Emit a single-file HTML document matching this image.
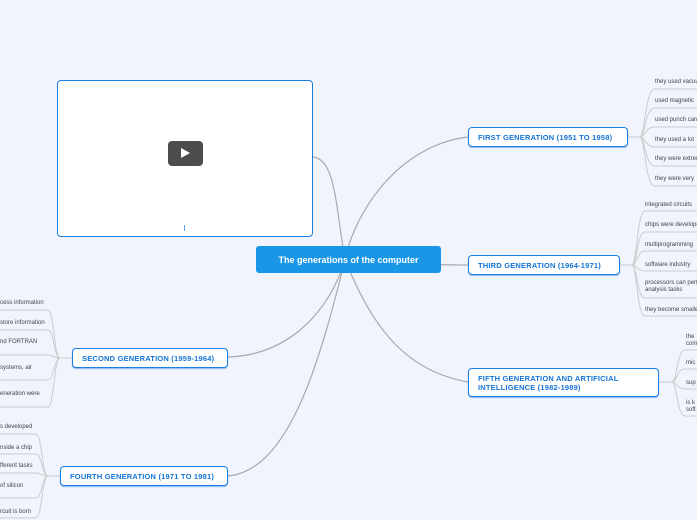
<!DOCTYPE html>
<html><head><meta charset="utf-8"><style>
body{margin:0;width:697px;height:520px;background:#f1f4fd;position:relative;overflow:hidden;font-family:"Liberation Sans",sans-serif}
.b{position:absolute;background:#fff;border:1px solid #1a7fe0;border-radius:4px;color:#1473d6;font-weight:bold;font-size:7.5px;box-sizing:border-box;display:flex;align-items:center;padding-left:9px;box-shadow:0 1px 1px #8ab8ee;letter-spacing:.2px}
.t{position:absolute;font-size:6px;color:#444;white-space:nowrap}
svg{position:absolute;left:0;top:0}
</style></head><body>
<svg width="697" height="520" fill="none" stroke="#aaa" stroke-width="1.2">
<path d="M345 260 C355 210 400 145 468 137"/>
<path d="M345 260 C380 262 420 265 468 265"/>
<path d="M345 260 C370 320 400 370 468 382"/>
<path d="M345 260 C330 310 290 355 228 357"/>
<path d="M345 260 C320 360 290 470 228 476"/>
<path d="M345 260 C335 200 335 160 313 157"/>
<g stroke="#ccc" stroke-width="1">
<path d="M628 137 H640 M640 137 C645 137 645 89 655 89 H697 M640 137 C645 137 645 108 655 108 H697 M640 137 C645 137 645 127 655 127 H697 M640 137 C645 137 645 147 655 147 H697 M640 137 C645 137 645 166 655 166 H697 M640 137 C645 137 645 186 655 186 H697"/>
<path d="M620 265 H632 M632 265 C637 265 637 211 645 211 H697 M632 265 C637 265 637 232 645 232 H697 M632 265 C637 265 637 251 645 251 H697 M632 265 C637 265 637 271 645 271 H697 M632 265 C637 265 637 298 645 298 H697 M632 265 C637 265 637 316 645 316 H697"/>
<path d="M659 382 H672 M672 382 C677 382 677 350 685 350 H697 M672 382 C677 382 677 369 685 369 H697 M672 382 C677 382 677 389 685 389 H697 M672 382 C677 382 677 416 685 416 H697"/>
<path d="M72 358 H60 M60 358 C54 358 54 310 48 310 H0 M60 358 C54 358 54 330 48 330 H0 M60 358 C54 358 54 355 48 355 H0 M60 358 C54 358 54 380 48 380 H0 M60 358 C54 358 54 407 48 407 H0"/>
<path d="M60 476 H48 M48 476 C42 476 42 434 36 434 H0 M48 476 C42 476 42 454 36 454 H0 M48 476 C42 476 42 473 36 473 H0 M48 476 C42 476 42 498 36 498 H0 M48 476 C42 476 42 518 36 518 H0"/>
</g></svg>
<div style="position:absolute;left:57px;top:80px;width:256px;height:157px;background:#fff;border:1px solid #1a7fe0;border-radius:4px;box-sizing:border-box"></div>
<div style="position:absolute;left:168px;top:141px;width:35px;height:25px;background:#4d4d4d;border-radius:4px"></div>
<div style="position:absolute;left:181px;top:148px;width:0;height:0;border-left:9px solid #fff;border-top:5.5px solid transparent;border-bottom:5.5px solid transparent"></div>
<div style="position:absolute;left:184px;top:225px;width:1px;height:6px;background:#5d9ee8"></div>
<div style="position:absolute;left:256px;top:246px;width:185px;height:27px;background:#1a96e6;border-radius:3px;color:#fff;font-weight:bold;font-size:9px;display:flex;align-items:center;justify-content:center">The generations of the computer</div>
<div class="b" style="left:468px;top:127px;width:160px;height:20px">FIRST GENERATION (1951 TO 1958)</div>
<div class="b" style="left:468px;top:255px;width:152px;height:20px">THIRD GENERATION (1964-1971)</div>
<div class="b" style="left:468px;top:368px;width:191px;height:29px;line-height:9px">FIFTH GENERATION AND ARTIFICIAL<br>INTELLIGENCE (1982-1989)</div>
<div class="b" style="left:72px;top:348px;width:156px;height:20px">SECOND GENERATION (1959-1964)</div>
<div class="b" style="left:60px;top:466px;width:168px;height:20px">FOURTH GENERATION (1971 TO 1981)</div>
<div class="t" style="left:655px;top:79px">they used vacuum</div>
<div class="t" style="left:655px;top:98px">used magnetic</div>
<div class="t" style="left:655px;top:117px">used punch cards</div>
<div class="t" style="left:655px;top:137px">they used a lot</div>
<div class="t" style="left:655px;top:156px">they were extremely</div>
<div class="t" style="left:655px;top:176px">they were very</div>
<div class="t" style="left:645px;top:202px">integrated circuits</div>
<div class="t" style="left:645px;top:222px">chips were developed</div>
<div class="t" style="left:645px;top:242px">multiprogramming</div>
<div class="t" style="left:645px;top:262px">software industry</div>
<div class="t" style="left:645px;top:280px;line-height:7px">processors can perform<br>analysis tasks</div>
<div class="t" style="left:645px;top:307px">they become smaller</div>
<div class="t" style="left:686px;top:334px;line-height:7px">the<br>com</div>
<div class="t" style="left:686px;top:360px">mic</div>
<div class="t" style="left:686px;top:380px">sup</div>
<div class="t" style="left:686px;top:400px;line-height:7px">is k<br>soft</div>
<div class="t" style="left:0;top:300px">cess information</div>
<div class="t" style="left:0;top:320px">store information</div>
<div class="t" style="left:0;top:339px">nd FORTRAN</div>
<div class="t" style="left:0;top:365px">systems, air</div>
<div class="t" style="left:0;top:391px">eneration were</div>
<div class="t" style="left:0;top:424px">s developed</div>
<div class="t" style="left:0;top:445px">nside a chip</div>
<div class="t" style="left:0;top:463px">fferent tasks</div>
<div class="t" style="left:0;top:483px">of silicon</div>
<div class="t" style="left:0;top:509px">rcuit is born</div>
</body></html>
